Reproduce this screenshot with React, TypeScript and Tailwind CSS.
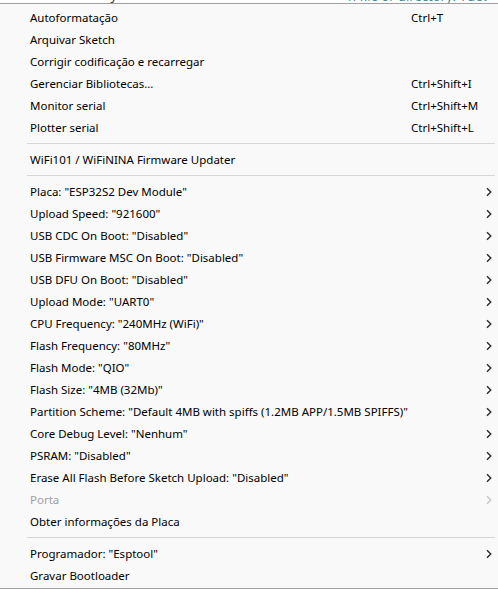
import React from "react";

type Item =
  | { kind: "sep" }
  | { kind: "item"; label: string; shortcut?: string; sub?: boolean; disabled?: boolean };

const items: Item[] = [
  { kind: "item", label: "Autoformatação", shortcut: "Ctrl+T" },
  { kind: "item", label: "Arquivar Sketch" },
  { kind: "item", label: "Corrigir codificação e recarregar" },
  { kind: "item", label: "Gerenciar Bibliotecas...", shortcut: "Ctrl+Shift+I" },
  { kind: "item", label: "Monitor serial", shortcut: "Ctrl+Shift+M" },
  { kind: "item", label: "Plotter serial", shortcut: "Ctrl+Shift+L" },
  { kind: "sep" },
  { kind: "item", label: "WiFi101 / WiFiNINA Firmware Updater" },
  { kind: "sep" },
  { kind: "item", label: 'Placa: "ESP32S2 Dev Module"', sub: true },
  { kind: "item", label: 'Upload Speed: "921600"', sub: true },
  { kind: "item", label: 'USB CDC On Boot: "Disabled"', sub: true },
  { kind: "item", label: 'USB Firmware MSC On Boot: "Disabled"', sub: true },
  { kind: "item", label: 'USB DFU On Boot: "Disabled"', sub: true },
  { kind: "item", label: 'Upload Mode: "UART0"', sub: true },
  { kind: "item", label: 'CPU Frequency: "240MHz (WiFi)"', sub: true },
  { kind: "item", label: 'Flash Frequency: "80MHz"', sub: true },
  { kind: "item", label: 'Flash Mode: "QIO"', sub: true },
  { kind: "item", label: 'Flash Size: "4MB (32Mb)"', sub: true },
  {
    kind: "item",
    label: 'Partition Scheme: "Default 4MB with spiffs (1.2MB APP/1.5MB SPIFFS)"',
    sub: true,
  },
  { kind: "item", label: 'Core Debug Level: "Nenhum"', sub: true },
  { kind: "item", label: 'PSRAM: "Disabled"', sub: true },
  { kind: "item", label: 'Erase All Flash Before Sketch Upload: "Disabled"', sub: true },
  { kind: "item", label: "Porta", sub: true, disabled: true },
  { kind: "item", label: "Obter informações da Placa" },
  { kind: "sep" },
  { kind: "item", label: 'Programador: "Esptool"', sub: true },
  { kind: "item", label: "Gravar Bootloader" },
];

function Chevron({ disabled }: { disabled?: boolean }) {
  return (
    <svg width="6" height="10" viewBox="0 0 6 10" aria-hidden>
      <path
        d="M1 1.2 L4.8 5 L1 8.8"
        fill="none"
        stroke={disabled ? "#c4c4c4" : "#2b2b2b"}
        strokeWidth="1.4"
      />
    </svg>
  );
}

export default function App() {
  return (
    <div
      className="relative h-[590px] w-[498px] overflow-hidden bg-white text-[11.5px] text-black"
      style={{ fontFamily: '"Noto Sans", "Open Sans", sans-serif' }}
    >
      {/* editor behind the menu, only a sliver shows */}
      <div className="relative h-[3px] overflow-hidden bg-white">
        <span className="absolute left-[70px] top-[-11px] text-[13px] leading-[13px] text-[#333]">
          Sketchy
        </span>
        <span className="absolute left-[348px] top-[-10px] whitespace-nowrap text-[13px] leading-[13px] text-[#3f8f8f]">
          h file or directory: '/dev
        </span>
      </div>

      <div className="border-y border-[#a0a0a0] bg-[#f9f9f9] pb-px pt-[3px]">
        {items.map((it, i) =>
          it.kind === "sep" ? (
            <div key={i} className="flex h-[10px] flex-col pl-[27px] pr-[3px] pt-[4px]">
              <div className="h-px bg-[#d7d7d7]" />
            </div>
          ) : (
            <div
              key={i}
              className={`flex h-[22px] items-center whitespace-nowrap ${
                it.disabled ? "text-[#a0a0a0]" : "text-black"
              }`}
            >
              <span className="ml-[30px] w-[381px] shrink-0">{it.label}</span>
              <span className="flex-1">{it.shortcut}</span>
              <span className="mr-[5px] flex w-[8px] justify-center">
                {it.sub ? <Chevron disabled={it.disabled} /> : null}
              </span>
            </div>
          ),
        )}
      </div>
    </div>
  );
}
